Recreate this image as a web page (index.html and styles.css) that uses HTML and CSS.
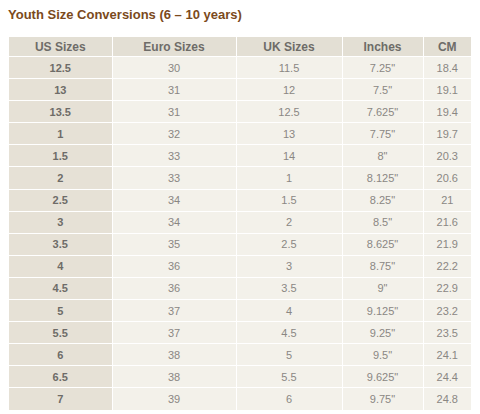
FILE: index.html
```html
<!DOCTYPE html>
<html>
<head>
<meta charset="utf-8">
<link rel="stylesheet" href="styles.css">
</head>
<body>
<h2 class="title">Youth Size Conversions (6 – 10 years)</h2>
<table class="sizes">
<colgroup>
<col class="c1"><col class="c2"><col class="c3"><col class="c4"><col class="c5">
</colgroup>
<thead>
<tr><th>US Sizes</th><th>Euro Sizes</th><th>UK Sizes</th><th>Inches</th><th>CM</th></tr>
</thead>
<tbody>
<tr><td>12.5</td><td>30</td><td>11.5</td><td>7.25"</td><td>18.4</td></tr>
<tr><td>13</td><td>31</td><td>12</td><td>7.5"</td><td>19.1</td></tr>
<tr><td>13.5</td><td>31</td><td>12.5</td><td>7.625"</td><td>19.4</td></tr>
<tr><td>1</td><td>32</td><td>13</td><td>7.75"</td><td>19.7</td></tr>
<tr><td>1.5</td><td>33</td><td>14</td><td>8"</td><td>20.3</td></tr>
<tr><td>2</td><td>33</td><td>1</td><td>8.125"</td><td>20.6</td></tr>
<tr><td>2.5</td><td>34</td><td>1.5</td><td>8.25"</td><td>21</td></tr>
<tr><td>3</td><td>34</td><td>2</td><td>8.5"</td><td>21.6</td></tr>
<tr><td>3.5</td><td>35</td><td>2.5</td><td>8.625"</td><td>21.9</td></tr>
<tr><td>4</td><td>36</td><td>3</td><td>8.75"</td><td>22.2</td></tr>
<tr><td>4.5</td><td>36</td><td>3.5</td><td>9"</td><td>22.9</td></tr>
<tr><td>5</td><td>37</td><td>4</td><td>9.125"</td><td>23.2</td></tr>
<tr><td>5.5</td><td>37</td><td>4.5</td><td>9.25"</td><td>23.5</td></tr>
<tr><td>6</td><td>38</td><td>5</td><td>9.5"</td><td>24.1</td></tr>
<tr><td>6.5</td><td>38</td><td>5.5</td><td>9.625"</td><td>24.4</td></tr>
<tr><td>7</td><td>39</td><td>6</td><td>9.75"</td><td>24.8</td></tr>
</tbody>
</table>
</body>
</html>
```
FILE: styles.css
```css
html, body {
  margin: 0;
  padding: 0;
  background: #ffffff;
}
body {
  padding: 7px 9px 0 9px;
  font-family: "Liberation Sans", Arial, sans-serif;
}
.title {
  margin: 0 0 14px -1px;
  font-size: 13px;
  line-height: 16px;
  font-weight: bold;
  color: #7b4a1c;
}
.sizes {
  width: 462px;
  border-collapse: collapse;
  table-layout: fixed;
}
.c1 { width: 103px; }
.c2 { width: 124px; }
.c3 { width: 106px; }
.c4 { width: 81px; }
.c5 { width: 48px; }
.sizes th, .sizes td {
  padding: 0;
  text-align: center;
  border: 1px solid #ffffff;
}
.sizes th {
  height: 19px;
  background: #e3dfd4;
  color: #6e6c68;
  font-size: 12px;
  font-weight: bold;
  border-top: none;
}
.sizes td {
  height: 21.1px;
  background: #f3f1ea;
  color: #8a8783;
  font-size: 11px;
}
.sizes td:first-child {
  background: #e6e1d6;
  color: #6e6c68;
  font-weight: bold;
}
.sizes th:first-child, .sizes td:first-child { border-left: none; }
.sizes th:last-child, .sizes td:last-child { border-right: none; }
.sizes tr:last-child td { border-bottom: none; }
```
